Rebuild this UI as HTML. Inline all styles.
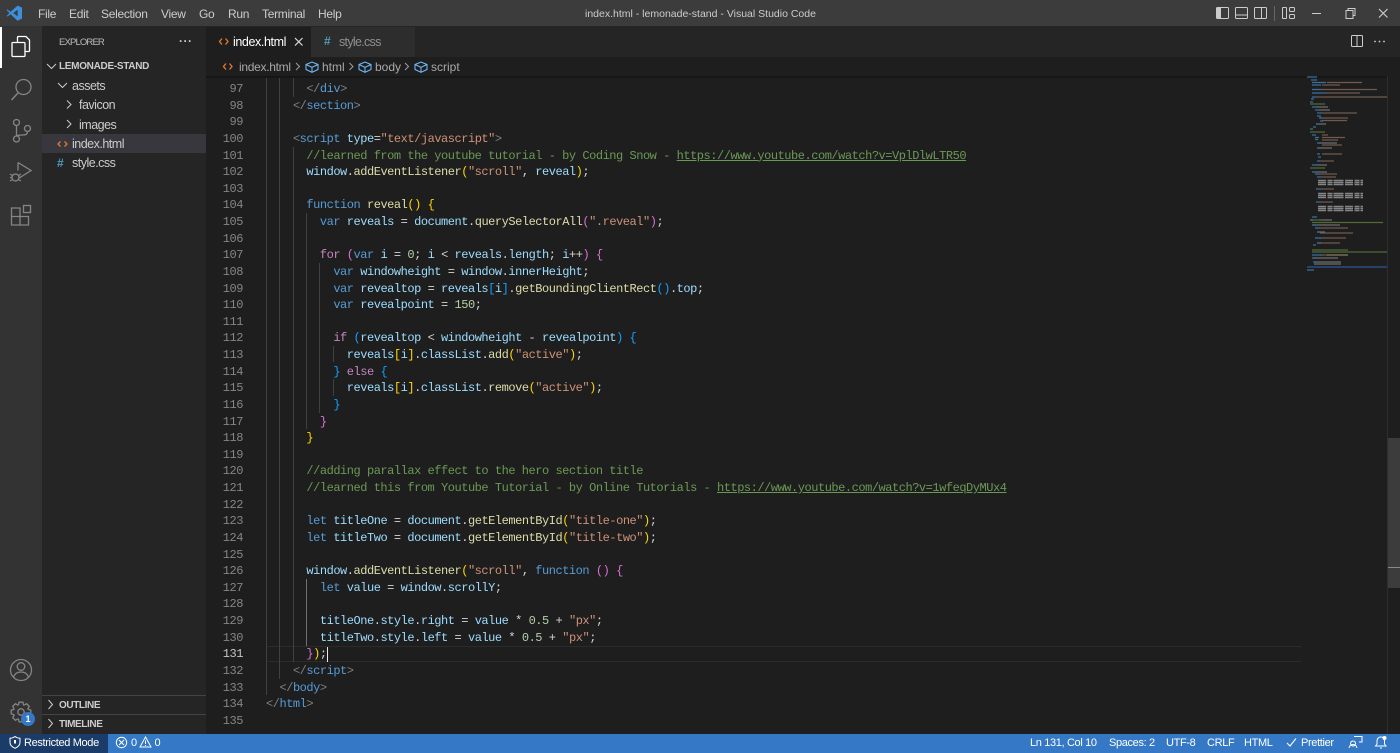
<!DOCTYPE html>
<html><head><meta charset="utf-8"><title>index.html - lemonade-stand - Visual Studio Code</title>
<style>
html,body{margin:0;padding:0;width:1400px;height:753px;overflow:hidden;background:#1e1e1e}
body{position:relative;font-family:"Liberation Sans",sans-serif;font-size:12px;color:#ccc}
.a{position:absolute;white-space:nowrap}
.t{position:absolute;white-space:nowrap;line-height:16px}
.m{letter-spacing:-.3px}
pre{margin:0;position:absolute;font-family:"Liberation Mono",monospace;font-size:12px;letter-spacing:-.47px;line-height:16.63px}
#code{left:266px;top:81px;color:#d4d4d4}
#nums{left:206px;top:81px;width:37px;text-align:right;color:#858585}
#nums b{font-weight:normal;color:#c6c6c6}
.g{color:#808080}.h{color:#569cd6}.at{color:#9cdcfe}.s{color:#ce9178}.c{color:#6a9955}.v{color:#9cdcfe}.f{color:#dcdcaa}.k{color:#569cd6}.x{color:#c586c0}.n{color:#b5cea8}.y{color:#ffd700}.p{color:#da70d6}.b{color:#179fff}
.c u{text-decoration:underline}
.ig{position:absolute;width:1px}
.side{font-size:12.5px;letter-spacing:-.5px;color:#ccc}
.st{color:#fff;font-size:11px;letter-spacing:-.35px;line-height:19px;top:734px}
svg{position:absolute;overflow:visible}
</style></head><body>

<!-- title bar -->
<div class="a" style="left:0;top:0;width:1400px;height:26px;background:#3c3c3c"></div>
<svg style="left:0;top:0" width="30" height="26"><path fill="#3c8fd8" d="M17.600 5.600 22 7.600v11l-4.400 2.100-7.100-6.500-3 2.300L6.500 16l3-3-3-3 1-.5 3 2.300zM17.700 9.700 13.200 13l4.500 3.400z"/></svg>
<div class="t m" style="left:38px;top:6px">File</div>
<div class="t m" style="left:69px;top:6px">Edit</div>
<div class="t m" style="left:101px;top:6px">Selection</div>
<div class="t m" style="left:161px;top:6px">View</div>
<div class="t m" style="left:199px;top:6px">Go</div>
<div class="t m" style="left:228px;top:6px">Run</div>
<div class="t m" style="left:262px;top:6px">Terminal</div>
<div class="t m" style="left:318px;top:6px">Help</div>
<div class="t" style="left:585px;top:6px;color:#ccc;font-size:10.500px">index.html - lemonade-stand - Visual Studio Code</div>
<svg style="left:1210px;top:0" width="190" height="26" fill="none" stroke="#ccc" stroke-width="1">
<rect x="6.500" y="7.500" width="12" height="11" rx="1"/><rect x="7" y="8" width="4" height="10" fill="#ccc" stroke="none"/>
<rect x="25.500" y="7.500" width="12" height="11" rx="1"/><path d="M26 15h11"/>
<rect x="44.500" y="7.500" width="12" height="11" rx="1"/><path d="M51.500 8v10"/>
<path d="M64.500 6v15" stroke="#666"/>
<rect x="72.500" y="7.500" width="4" height="11" rx=".5"/><rect x="79.500" y="7.500" width="5" height="4" rx="1"/><rect x="79.500" y="14.500" width="5" height="4" rx="1"/>
<path d="M102 13.500h9"/>
<path d="M136 10.500h7v8h-7zM138 10.500V8.500h7v7h-2"/>
<path d="M169 9l8.500 8.500M177.500 9 169 17.500" stroke-width="1.200"/>
</svg>

<!-- activity bar -->
<div class="a" style="left:0;top:26px;width:42px;height:708px;background:#333"></div>
<div class="a" style="left:0;top:27px;width:2px;height:41px;background:#fff"></div>
<svg style="left:0;top:26px" width="42" height="708" fill="none" stroke="#858585" stroke-width="1.300">
<path stroke="#fff" d="M17.500 16v-4.500a1 1 0 0 1 1-1h7.500l3.500 3.500v10.500a1 1 0 0 1-1 1H25"/>
<rect stroke="#fff" x="12" y="16.500" width="13" height="14" rx="1"/>
<circle cx="23.500" cy="61" r="7.500"/><path d="M18 67l-6.500 7" stroke-width="1.500"/>
<circle cx="16.500" cy="96.500" r="3"/><circle cx="16.500" cy="113" r="3"/><circle cx="27.500" cy="102.500" r="3"/><path d="M16.500 99.500V110M27.500 105.500c0 3-2 3.500-5 3.500-3 0-6 .5-6 1"/>
<path d="M18 136.500l13 8-11 7M18 136.500v8"/><circle cx="15.500" cy="151.500" r="3.500"/><path d="M10 148l2.500 1.500M21 148l-2.500 1.500M10 155l2.500-1.500M21 155l-2.500-1.500M10 151.500h2M19 151.500h2"/>
<path d="M11.500 190v-8h8.500v17h-8.500zM11.500 190.500h17v8.500H20M20 182v8.500"/><rect x="23.500" y="179.500" width="7" height="7"/>
<circle cx="21" cy="644" r="10.500"/><circle cx="21" cy="640.500" r="3.800"/><path d="M13.500 651.500c1-4 4-5.500 7.500-5.500s6.500 1.500 7.500 5.500"/>
<circle cx="21" cy="686" r="3.200"/>
<g transform="translate(21 686)">
<path d="M7.050-2.570 9.820-1.910V1.910L7.050 2.570A7.500 7.500 0 0 1 6.800 3.170"/>
<path transform="rotate(45)" d="M7.050-2.570 9.820-1.910V1.910L7.050 2.570A7.500 7.500 0 0 1 6.800 3.170"/>
<path transform="rotate(90)" d="M7.050-2.570 9.820-1.910V1.910L7.050 2.570A7.500 7.500 0 0 1 6.800 3.170"/>
<path transform="rotate(135)" d="M7.050-2.570 9.820-1.910V1.910L7.050 2.570A7.500 7.500 0 0 1 6.800 3.170"/>
<path transform="rotate(180)" d="M7.050-2.570 9.820-1.910V1.910L7.050 2.570A7.500 7.500 0 0 1 6.800 3.170"/>
<path transform="rotate(225)" d="M7.050-2.570 9.820-1.910V1.910L7.050 2.570A7.500 7.500 0 0 1 6.800 3.170"/>
<path transform="rotate(270)" d="M7.050-2.570 9.820-1.910V1.910L7.050 2.570A7.500 7.500 0 0 1 6.800 3.170"/>
<path transform="rotate(315)" d="M7.050-2.570 9.820-1.910V1.910L7.050 2.570A7.500 7.500 0 0 1 6.800 3.170"/>
</g>
<circle cx="28" cy="693" r="7" fill="#3478c6" stroke="none"/>
</svg>
<div class="a" style="left:25.500px;top:713px;font-size:9px;line-height:12px;font-weight:bold;color:#fff">1</div>

<!-- sidebar -->
<div class="a" style="left:42px;top:26px;width:164px;height:708px;background:#252526"></div>
<div class="t" style="left:59px;top:35px;font-size:9.500px;letter-spacing:-.85px;color:#bbb">EXPLORER</div>
<div class="t" style="left:179px;top:33px;font-size:12px;color:#ccc;font-weight:bold;letter-spacing:.5px">···</div>
<svg style="left:42px;top:26px" width="164" height="708" fill="none" stroke="#ccc" stroke-width="1">
<path d="M5 38l4.500 4.500L14 38"/><path d="M16 57l4.500 4.500L25 57"/><path d="M25 74.500l4 4-4 4M25 94l4 4-4 4"/>
<path d="M6.500 674l4 4.500-4 4.500M6.500 693l4 4.500-4 4.500"/>
</svg>
<div class="t" style="left:59px;top:59px;font-size:10px;letter-spacing:-.3px;font-weight:bold;color:#ccc">LEMONADE-STAND</div>
<div class="a" style="left:42px;top:134px;width:164px;height:19px;background:#37373d"></div>
<div class="t side" style="left:72px;top:78px">assets</div>
<div class="t side" style="left:79px;top:97px">favicon</div>
<div class="t side" style="left:79px;top:117px">images</div>
<div class="t side" style="left:72px;top:136px">index.html</div>
<div class="t side" style="left:72px;top:155px">style.css</div>
<svg style="left:0;top:0" width="300" height="80" fill="none" stroke="#e37933" stroke-width="1.300"><path d="M60.500 141.500 58 144l2.500 2.500M64.500 141.500 67 144l-2.500 2.500" /></svg>
<div class="t" style="left:57px;top:155px;font-size:12px;font-weight:bold;color:#519aba">#</div>
<div class="a" style="left:42px;top:695px;width:164px;height:1px;background:#444"></div>
<div class="a" style="left:42px;top:714px;width:164px;height:1px;background:#444"></div>
<div class="t" style="left:59px;top:698px;font-size:10px;letter-spacing:-.4px;font-weight:bold;color:#ccc">OUTLINE</div>
<div class="t" style="left:59px;top:717px;font-size:10px;letter-spacing:-.4px;font-weight:bold;color:#ccc">TIMELINE</div>

<!-- tabs -->
<div class="a" style="left:206px;top:26px;width:1194px;height:31px;background:#252526"></div>
<div class="a" style="left:206px;top:27px;width:105px;height:30px;background:#1e1e1e"></div>
<div class="a" style="left:311px;top:27px;width:104px;height:30px;background:#2d2d2d"></div>
<svg style="left:0;top:0" width="440" height="80" fill="none" stroke="#e37933" stroke-width="1.300">
<path d="M222 38.500 219.500 41.500l2.500 3M225.500 38.500l2.500 3-2.500 3"/>
<path d="M226 63.500 223.500 66.500l2.500 3M229.500 63.500l2.500 3-2.500 3"/>
<path stroke="#ddd" stroke-width="1.200" d="M295 38l7.500 7.500M302.500 38 295 45.500"/>
</svg>
<div class="t" style="left:233px;top:34px;font-size:12.500px;letter-spacing:-.4px;color:#fff">index.html</div>
<div class="t" style="left:324px;top:33px;font-size:12px;font-weight:bold;color:#519aba">#</div>
<div class="t" style="left:339px;top:34px;font-size:12.500px;letter-spacing:-.7px;color:#8f8f8f">style.css</div>
<svg style="left:1340px;top:26px" width="60" height="30" fill="none" stroke="#ccc"><rect x="11.500" y="9.500" width="11" height="11" rx="1"/><path d="M17 10v10"/><circle cx="35" cy="15.500" r=".9" fill="#ccc" stroke="none"/><circle cx="39.500" cy="15.500" r=".9" fill="#ccc" stroke="none"/><circle cx="44" cy="15.500" r=".9" fill="#ccc" stroke="none"/></svg>

<!-- breadcrumb -->
<div class="t" style="left:239px;top:59px;font-size:12px;letter-spacing:-.3px;color:#a9a9a9">index.html</div>
<div class="t" style="left:322px;top:59px;font-size:12px;color:#a9a9a9">html</div>
<div class="t" style="left:375px;top:59px;font-size:12px;color:#a9a9a9">body</div>
<div class="t" style="left:431px;top:59px;font-size:12px;color:#a9a9a9">script</div>
<svg style="left:0;top:0" width="470" height="80" fill="none" stroke="#a0a0a0">
<path d="M296 63l3.500 3.500-3.500 3.500M349.500 63l3.500 3.500-3.500 3.500M405 63l3.500 3.500-3.500 3.500"/>
<g stroke="#75beff"><path d="M306 64.500l6-2.500 6 2.500v5l-6 2.800-6-2.800zM306 64.500l6 2.800 6-2.800M312 67.300v5"/><path d="M359 64.500l6-2.500 6 2.500v5l-6 2.800-6-2.800zM359 64.500l6 2.800 6-2.800M365 67.300v5"/><path d="M415 64.500l6-2.500 6 2.500v5l-6 2.800-6-2.800zM415 64.500l6 2.800 6-2.800M421 67.300v5"/></g>
</svg>
<div class="a" style="left:206px;top:76px;width:1182px;height:2px;background:#161616"></div>

<!-- current line -->
<div class="a" style="left:266px;top:646px;width:1035px;height:1px;background:#2b2b2b"></div>
<div class="a" style="left:266px;top:661px;width:1035px;height:1px;background:#2b2b2b"></div>

<!-- indent guides -->
<div class="ig" style="left:266px;top:78px;height:617px;background:#404040"></div>
<div class="ig" style="left:279px;top:78px;height:601px;background:#404040"></div>
<div class="ig" style="left:293px;top:78px;height:19px;background:#404040"></div>
<div class="ig" style="left:293px;top:147px;height:515px;background:#404040"></div>
<div class="ig" style="left:306px;top:213px;height:216px;background:#404040"></div>
<div class="ig" style="left:306px;top:579px;height:67px;background:#707070"></div>
<div class="ig" style="left:319px;top:263px;height:150px;background:#404040"></div>
<div class="ig" style="left:333px;top:346px;height:16px;background:#404040"></div>
<div class="ig" style="left:333px;top:379px;height:17px;background:#404040"></div>

<pre id="nums">97
98
99
100
101
102
103
104
105
106
107
108
109
110
111
112
113
114
115
116
117
118
119
120
121
122
123
124
125
126
127
128
129
130
<b>131</b>
132
133
134
135</pre>

<pre id="code">      <span class="g">&lt;/</span><span class="h">div</span><span class="g">&gt;</span>
    <span class="g">&lt;/</span><span class="h">section</span><span class="g">&gt;</span>

    <span class="g">&lt;</span><span class="h">script</span> <span class="at">type</span>=<span class="s">"text/javascript"</span><span class="g">&gt;</span>
      <span class="c">//learned from the youtube tutorial - by Coding Snow - <u>https://www.youtube.com/watch?v=VplDlwLTR50</u></span>
      <span class="v">window</span>.<span class="f">addEventListener</span><span class="y">(</span><span class="s">"scroll"</span>, <span class="v">reveal</span><span class="y">)</span>;

      <span class="k">function</span> <span class="f">reveal</span><span class="y">()</span> <span class="y">{</span>
        <span class="k">var</span> <span class="v">reveals</span> = <span class="v">document</span>.<span class="f">querySelectorAll</span><span class="p">(</span><span class="s">".reveal"</span><span class="p">)</span>;

        <span class="x">for</span> <span class="p">(</span><span class="k">var</span> <span class="v">i</span> = <span class="n">0</span>; <span class="v">i</span> &lt; <span class="v">reveals</span>.<span class="v">length</span>; <span class="v">i</span>++<span class="p">)</span> <span class="p">{</span>
          <span class="k">var</span> <span class="v">windowheight</span> = <span class="v">window</span>.<span class="v">innerHeight</span>;
          <span class="k">var</span> <span class="v">revealtop</span> = <span class="v">reveals</span><span class="b">[</span><span class="v">i</span><span class="b">]</span>.<span class="f">getBoundingClientRect</span><span class="b">()</span>.<span class="v">top</span>;
          <span class="k">var</span> <span class="v">revealpoint</span> = <span class="n">150</span>;

          <span class="x">if</span> <span class="b">(</span><span class="v">revealtop</span> &lt; <span class="v">windowheight</span> - <span class="v">revealpoint</span><span class="b">)</span> <span class="b">{</span>
            <span class="v">reveals</span><span class="y">[</span><span class="v">i</span><span class="y">]</span>.<span class="v">classList</span>.<span class="f">add</span><span class="y">(</span><span class="s">"active"</span><span class="y">)</span>;
          <span class="b">}</span> <span class="x">else</span> <span class="b">{</span>
            <span class="v">reveals</span><span class="y">[</span><span class="v">i</span><span class="y">]</span>.<span class="v">classList</span>.<span class="f">remove</span><span class="y">(</span><span class="s">"active"</span><span class="y">)</span>;
          <span class="b">}</span>
        <span class="p">}</span>
      <span class="y">}</span>

      <span class="c">//adding parallax effect to the hero section title</span>
      <span class="c">//learned this from Youtube Tutorial - by Online Tutorials - <u>https://www.youtube.com/watch?v=1wfeqDyMUx4</u></span>

      <span class="k">let</span> <span class="v">titleOne</span> = <span class="v">document</span>.<span class="f">getElementById</span><span class="y">(</span><span class="s">"title-one"</span><span class="y">)</span>;
      <span class="k">let</span> <span class="v">titleTwo</span> = <span class="v">document</span>.<span class="f">getElementById</span><span class="y">(</span><span class="s">"title-two"</span><span class="y">)</span>;

      <span class="v">window</span>.<span class="f">addEventListener</span><span class="y">(</span><span class="s">"scroll"</span>, <span class="k">function</span> <span class="p">()</span> <span class="p">{</span>
        <span class="k">let</span> <span class="v">value</span> = <span class="v">window</span>.<span class="v">scrollY</span>;

        <span class="v">titleOne</span>.<span class="v">style</span>.<span class="v">right</span> = <span class="v">value</span> * <span class="n">0.5</span> + <span class="s">"px"</span>;
        <span class="v">titleTwo</span>.<span class="v">style</span>.<span class="v">left</span> = <span class="v">value</span> * <span class="n">0.5</span> + <span class="s">"px"</span>;
      <span class="p">}</span><span class="y">)</span>;
    <span class="g">&lt;/</span><span class="h">script</span><span class="g">&gt;</span>
  <span class="g">&lt;/</span><span class="h">body</span><span class="g">&gt;</span>
<span class="g">&lt;/</span><span class="h">html</span><span class="g">&gt;</span>
</pre>
<div class="a" style="left:327px;top:647px;width:1px;height:15px;background:#e8e8e8"></div>

<!-- minimap -->
<svg style="left:0;top:0" width="1400" height="753" fill="none" stroke-width="1.300">
<path stroke="#6e5a4e" d="M1327 82.500h35M1322 85h18M1320 89.500h57M1326 93h34M1316 97h71M1322 135h6M1320 118h28M1322 120.500h25M1321 113h36M1322 137.500h23M1322 140h16M1322 145h20M1322 154h20M1320 161h14M1320 174h17M1321 177h15M1321 189h13M1321 202h12M1320 228h28M1320 233h33M1321 238h25M1320 243h20M1320 255h8"/>
<path stroke="#858585" stroke-width="1.500" stroke-dasharray="8 1.500 5 1 10 1.500" d="M1318 180.500h45M1318 182.500h45M1318 184.500h45M1318 193.500h45M1318 195.500h45M1318 197.500h45M1318 206.500h45M1318 208.500h45M1318 210.500h45"/>
<path stroke="#6e6e6e" d="M1316 107h12M1319 110h11M1316 124h10M1319 143h18M1318 148h14M1316 165h11M1315 172h12M1319 220h13M1313 225h27M1317 232h8M1317 243h4M1313 258h25M1314 262h27M1314 264h27"/>
<path stroke="#4f6b38" d="M1310 104h15M1310 132h15M1310 168h15M1311 220h11M1312 222.500h71M1312 250h36M1312 252h75"/>
<path stroke="#8a7d5c" d="M1327 255h21"/>
<path stroke="#3a6f9f" d="M1307 77h10M1311 80h6M1312 82.500h14M1312 85h9M1312 89.500h8M1312 93h14M1312 97h4M1311 99h3M1310 102h3M1312 107h4M1315 110h4M1317 113h4M1317 116h4M1319 118h3M1320 121h3M1317 124h3M1313 127h3M1310 129h3M1312 135h4M1315 137.500h4M1315 139.500h3M1317 143h3M1317 148h3M1317 154h3M1318 157h3M1317 161h3M1312 165h5M1312 172h3M1315 174h5M1317 177h4M1316 189h5M1316 202h5M1312 217h5M1310 220h3M1312 225h3M1315 228h5M1317 232h4M1315 238h6M1317 243h3M1313 245h3M1312 255h10M1312 258h4M1313 262h4M1307 270h7"/>
<path stroke="#2a5a92" d="M1307 267h80"/>
</svg>

<!-- scrollbar -->
<div class="a" style="left:1387px;top:76px;width:1px;height:658px;background:#2e2e2e"></div>
<div class="a" style="left:1388px;top:438px;width:12px;height:150px;background:#3c3c3c"></div>
<div class="a" style="left:1388px;top:567px;width:12px;height:1px;background:#8a8a8a"></div>

<!-- status bar -->
<div class="a" style="left:0;top:734px;width:1400px;height:19px;background:#3478c6"></div>
<div class="a" style="left:0;top:734px;width:108px;height:19px;background:#1b3c68"></div>
<svg style="left:0;top:734px" width="1400" height="19" fill="none" stroke="#fff" stroke-width="1">
<path d="M15 2.500c2 1.500 3.500 1.800 5 1.800v4c0 3.300-2.500 5-5 6-2.500-1-5-2.700-5-6v-4c1.500 0 3-.3 5-1.800z"/><path d="M15 6v3.500" stroke-width="2"/>
<circle cx="121.500" cy="8.500" r="5.200"/><path d="M119 6l5 5M124 6l-5 5"/>
<path d="M145.500 3 151 13h-11zM145.500 6.500v3.500M145.500 11v1"/>
<path d="M1287 9l3 3 6-7.500" stroke-width="1.100"/>
<path d="M1354 2.500h8v5.500h-3M1353 7a2.500 2.500 0 1 0 .1 0M1349 14c.5-2.500 2-3.500 4-3.500s3.500 1 4 3.500"/>
<path d="M1381 3c2.500 0 3.500 2 3.500 4v3l1.500 2h-10.500l1.500-2V7c0-2 1.500-4 3.500-4zM1380 14h2"/><circle cx="1384.500" cy="4" r="2" fill="#fff" stroke="none"/>
</svg>
<div class="a st" style="left:24px">Restricted Mode</div>
<div class="a st" style="left:131px">0</div>
<div class="a st" style="left:154.500px">0</div>
<div class="a st" style="left:1030px">Ln 131, Col 10</div>
<div class="a st" style="left:1109px">Spaces: 2</div>
<div class="a st" style="left:1166px">UTF-8</div>
<div class="a st" style="left:1207px">CRLF</div>
<div class="a st" style="left:1244px">HTML</div>
<div class="a st" style="left:1301px">Prettier</div>
</body></html>
